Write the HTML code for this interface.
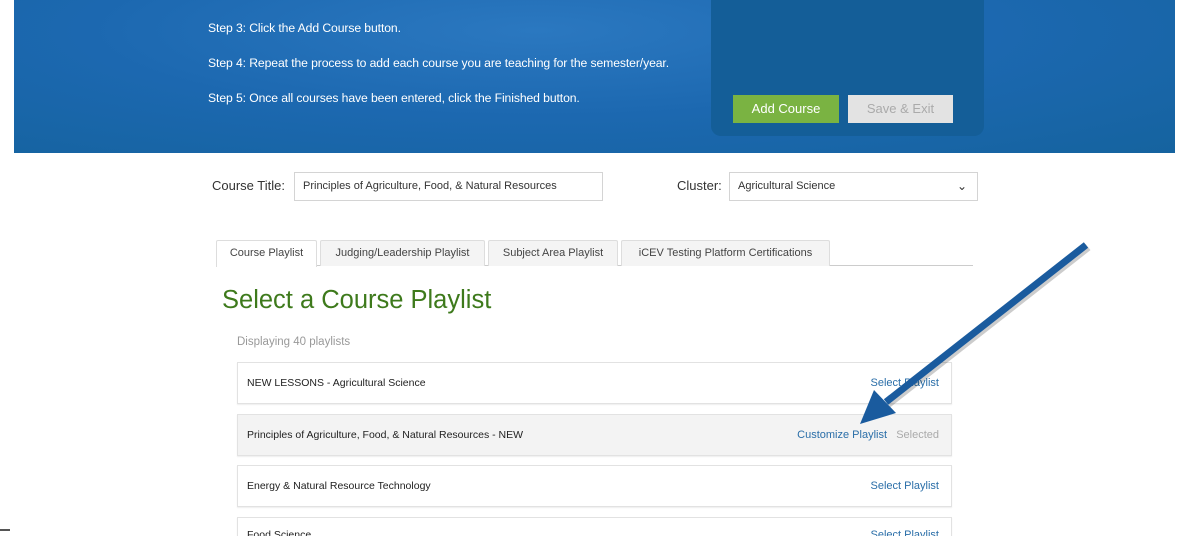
<!DOCTYPE html>
<html><head><meta charset="utf-8"><style>
*{margin:0;padding:0;box-sizing:border-box}
html,body{width:1197px;height:536px;overflow:hidden}
body{background:#fff;font-family:"Liberation Sans",Arial,sans-serif;position:relative}
.banner{position:absolute;left:14px;top:0;width:1161px;height:153px;background:radial-gradient(ellipse at 45% 20%,#2b78c0 0%,#1c68b0 50%,#15639f 100%)}
.step{position:absolute;left:208px;color:#fff;font-size:12.2px;letter-spacing:-0.1px}
.panel{position:absolute;left:711px;top:-10px;width:273px;height:146px;background:#145e98;border-radius:10px}
.btn{position:absolute;top:95px;height:28px;font-size:13px;line-height:28px;text-align:center}
.lbl{position:absolute;font-size:13px;color:#333}
.inp{position:absolute;border:1px solid #d4d4d4;font-size:11px;color:#333;padding-left:8px;line-height:27px;height:29px}
.tab{position:absolute;top:240px;height:26px;border:1px solid #ddd;border-bottom:none;background:#f4f4f4;font-size:11px;color:#444;line-height:24px;text-align:center;border-radius:2px 2px 0 0}
.row{position:absolute;left:237px;width:715px;height:42px;border:1px solid #e2e2e2;font-size:10.5px;color:#222;line-height:40px;padding-left:9px;box-shadow:0 1px 1px #eee}
.row .r{position:absolute;right:12px;top:0;color:#2a6ea8;font-size:11px}
</style></head><body>
<div class="banner"></div>
<div class="step" style="top:21px">Step 3: Click the Add Course button.</div>
<div class="step" style="top:56px">Step 4: Repeat the process to add each course you are teaching for the semester/year.</div>
<div class="step" style="top:91px">Step 5: Once all courses have been entered, click the Finished button.</div>
<div class="panel"></div>
<div class="btn" style="left:733px;width:106px;background:#7ab342;color:#fff">Add Course</div>
<div class="btn" style="left:848px;width:105px;background:#e3e3e3;color:#aaa">Save &amp; Exit</div>

<div class="lbl" style="left:212px;top:178px">Course Title:</div>
<div class="inp" style="left:294px;top:172px;width:309px">Principles of Agriculture, Food, &amp; Natural Resources</div>
<div class="lbl" style="left:677px;top:178px">Cluster:</div>
<div class="inp" style="left:729px;top:172px;width:249px">Agricultural Science<span style="position:absolute;right:10px;top:0;font-size:12px">&#8964;</span></div>

<div style="position:absolute;left:216px;top:265px;width:757px;border-top:1px solid #ccc"></div>
<div class="tab" style="left:216px;width:101px;background:#fff;height:27px">Course Playlist</div>
<div class="tab" style="left:320px;width:165px">Judging/Leadership Playlist</div>
<div class="tab" style="left:488px;width:130px">Subject Area Playlist</div>
<div class="tab" style="left:621px;width:209px">iCEV Testing Platform Certifications</div>

<div style="position:absolute;left:222px;top:286px;font-size:25.5px;color:#3e7a1c">Select a Course Playlist</div>
<div style="position:absolute;left:237px;top:336px;font-size:11.5px;color:#999">Displaying 40 playlists</div>

<div class="row" style="top:362px">NEW LESSONS - Agricultural Science<span class="r">Select Playlist</span></div>
<div class="row" style="top:414px;background:#f3f3f3">Principles of Agriculture, Food, &amp; Natural Resources - NEW<span class="r"><span>Customize Playlist</span> &nbsp; <span style="color:#aaa">Selected</span></span></div>
<div class="row" style="top:465px">Energy &amp; Natural Resource Technology<span class="r">Select Playlist</span></div>
<div class="row" style="top:517px;line-height:34px">Food Science<span class="r">Select Playlist</span></div>
<div style="position:absolute;left:0;top:529px;width:10px;height:2px;background:#555"></div>

<svg style="position:absolute;left:0;top:0" width="1197" height="536">
<line x1="1086" y1="245" x2="886" y2="402" stroke="#00000033" stroke-width="8" transform="translate(2,2)"/>
<line x1="1086" y1="245" x2="886" y2="402" stroke="#1a5b9e" stroke-width="7"/>
<polygon points="860,424 874,390 896,413" fill="#1a5b9e"/>
</svg>
</body></html>
